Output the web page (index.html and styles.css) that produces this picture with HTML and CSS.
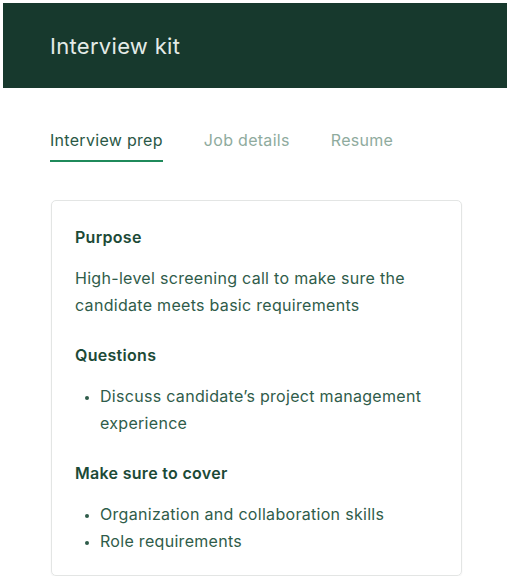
FILE: index.html
```html
<!DOCTYPE html>
<html lang="en">
<head>
<meta charset="utf-8">
<title>Interview kit</title>
<link rel="stylesheet" href="styles.css">
</head>
<body>
<header class="topbar">
  <h1 class="topbar-title">Interview kit</h1>
</header>
<main class="content">
  <nav class="tabs">
    <a class="tab tab-active">Interview prep</a>
    <a class="tab">Job details</a>
    <a class="tab">Resume</a>
  </nav>
  <section class="card">
    <div class="block">
      <h2 class="block-title">Purpose</h2>
      <p class="block-text">High-level screening call to make sure the candidate meets basic requirements</p>
    </div>
    <div class="block">
      <h2 class="block-title">Questions</h2>
      <ul class="block-list">
        <li>Discuss candidate’s project management experience</li>
      </ul>
    </div>
    <div class="block">
      <h2 class="block-title">Make sure to cover</h2>
      <ul class="block-list">
        <li>Organization and collaboration skills</li>
        <li>Role requirements</li>
      </ul>
    </div>
  </section>
</main>
</body>
</html>
```
FILE: styles.css
```css
* { box-sizing: border-box; }
html, body { margin: 0; padding: 0; background: #ffffff; }
body {
  padding: 3px 4px 0 3px;
  font-family: Inter, "Noto Sans", sans-serif;
  color: #234f3e;
}
.topbar {
  background: #17392d;
  height: 85px;
  display: flex;
  align-items: center;
  padding: 0 0 0 47px;
}
.topbar-title {
  margin: 0;
  font-size: 22px;
  line-height: 28px;
  font-weight: 400;
  color: #e4ebe7;
  letter-spacing: 0.3px;
}
.content {
  padding: 42px 0 0 47px;
  width: 460px;
}
.tabs {
  display: flex;
  gap: 41px;
}
.tab {
  font-size: 16px;
  line-height: 21px;
  letter-spacing: 0.3px;
  color: #8fab9e;
  padding-bottom: 9px;
  border-bottom: 2px solid transparent;
}
.tab-active {
  color: #2a5846;
  border-bottom-color: #1f8a5b;
}
.card {
  margin-top: 38px;
  margin-left: 1px;
  width: 411px;
  border: 1px solid #e3e5e4;
  border-radius: 5px;
  box-shadow: 0 1px 2px rgba(0,0,0,0.06);
  padding: 26px 23px 20px 23px;
  display: flex;
  flex-direction: column;
  gap: 26px;
}
.block-title {
  margin: 0 0 17px 0;
  font-size: 16px;
  line-height: 21px;
  letter-spacing: 0.3px;
  font-weight: 600;
  color: #1c4a37;
}
.block-text {
  margin: 0;
  font-size: 16px;
  line-height: 27px;
  letter-spacing: 0.3px;
  color: #2f5c4a;
}
.block-list {
  margin: 0;
  padding: 0 0 0 25px;
  font-size: 16px;
  line-height: 27px;
  letter-spacing: 0.3px;
  color: #2f5c4a;
}
.block-list li::marker {
  font-size: 12px;
}
```
